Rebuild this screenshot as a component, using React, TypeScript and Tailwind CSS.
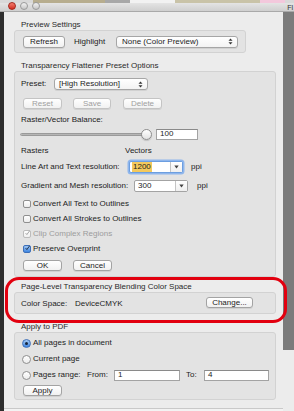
import React from "react";

const F = { fontFamily: '"Liberation Sans", Arial, sans-serif' };

function Btn({ w, children, disabled }: { w: string; children: React.ReactNode; disabled?: boolean }) {
  return (
    <div
      className={`${w} h-full flex items-center justify-center rounded-[3px] border border-[#a3a3a3] bg-gradient-to-b from-white to-[#f1f1f1] shadow-[0_1px_0_rgba(0,0,0,0.08)] text-[8px] leading-none ${disabled ? "text-[#a0a0a0] border-[#c4c4c4]" : "text-[#1c1c1c]"}`}
    >
      {children}
    </div>
  );
}

function Arrows() {
  return (
    <svg width="5" height="7" viewBox="0 0 5 7" className="shrink-0">
      <path d="M2.5 0.5 L4.5 2.8 L0.5 2.8 Z" fill="#333" />
      <path d="M2.5 6.5 L4.5 4.2 L0.5 4.2 Z" fill="#333" />
    </svg>
  );
}

function Select({ w, text, pl }: { w: string; text: string; pl: string }) {
  return (
    <div
      className={`${w} h-full flex items-center justify-between ${pl} pr-[4px] rounded-[3px] border border-[#a6a6a6] bg-gradient-to-b from-white to-[#f3f3f3] shadow-[0_1px_0_rgba(0,0,0,0.08)] text-[8px] leading-none text-[#1c1c1c]`}
    >
      <span>{text}</span>
      <Arrows />
    </div>
  );
}

function Combo({ w, text, focus }: { w: string; text: string; focus?: boolean }) {
  return (
    <div
      className={`${w} h-full flex rounded-[2px] border ${focus ? "border-[#6c9ee0] shadow-[0_0_0_1.5px_#8fb6ec]" : "border-[#a3a3a3]"} bg-white text-[8px] leading-none text-[#1c1c1c]`}
    >
      <div className="flex-1 flex items-center pl-[2px]">
        {focus ? <span className="bg-[#f4c95d] px-[1px] py-[1px]">{text}</span> : <span className="pl-[1px]">{text}</span>}
      </div>
      <div className="w-[12px] flex items-center justify-center border-l border-[#c4c4c4] bg-gradient-to-b from-white to-[#efefef]">
        <svg width="5" height="4" viewBox="0 0 5 4">
          <path d="M0.3 0.5 L4.7 0.5 L2.5 3.5 Z" fill="#444" />
        </svg>
      </div>
    </div>
  );
}

function Input({ w, text }: { w: string; text: string }) {
  return (
    <div
      className={`${w} h-full flex items-center pl-[3px] border border-[#a3a3a3] border-t-[#8a8a8a] bg-white text-[8px] leading-none text-[#1c1c1c]`}
    >
      {text}
    </div>
  );
}

function Check({ state }: { state: "off" | "dis" | "on" }) {
  if (state === "off")
    return <div className="w-[8px] h-[8px] rounded-[2px] border border-[#8f8f8f] bg-gradient-to-b from-white to-[#ececec]" />;
  const dis = state === "dis";
  return (
    <div
      className={`w-[8px] h-[8px] rounded-[2px] border flex items-center justify-center ${dis ? "border-[#bcbcbc] bg-gradient-to-b from-white to-[#efefef]" : "border-[#3d6fb8] bg-gradient-to-b from-[#9cc5f3] to-[#3d85e0]"}`}
    >
      <svg width="8" height="8" viewBox="0 0 8 8" className="-mt-[2px] ml-[1px]">
        <path d="M1 4.2 L3 6.5 L7.5 0.3" fill="none" stroke={dis ? "#9a9a9a" : "#15233a"} strokeWidth="1.4" />
      </svg>
    </div>
  );
}

function Radio({ on }: { on?: boolean }) {
  if (on)
    return (
      <div className="w-[9px] h-[9px] rounded-full border border-[#3d6fb8] bg-gradient-to-b from-[#a3c9f3] to-[#3d85e0] flex items-center justify-center">
        <div className="w-[3px] h-[3px] rounded-full bg-[#14243c]" />
      </div>
    );
  return <div className="w-[9px] h-[9px] rounded-full border border-[#8f8f8f] bg-gradient-to-b from-white to-[#ececec]" />;
}

function Label({ mt, children }: { mt: string; children: React.ReactNode }) {
  return <div className={`${mt} h-[10px] flex items-center pl-[7px] text-[8px] leading-none text-[#2a2a2a]`}>{children}</div>;
}

export default function App() {
  return (
    <div className="w-[294px] h-[411px] bg-[#ececec] relative overflow-hidden" style={F}>
      {/* title bar */}
      <div className="relative h-[12px]">
        <div className="h-[3px] flex">
          <div className="w-[33px] bg-[#d9d9d9]" />
          <div className="w-[72px] bg-[#b7ad8e]" />
          <div className="w-[25px] bg-[#a8a8a8]" />
          <div className="w-[45px] bg-[#f2f2f2]" />
          <div className="w-[85px] bg-[#c9c3a8]" />
          <div className="w-[25px] bg-[#f3c8dc]" />
          <div className="flex-1 bg-[#d9d9d9]" />
        </div>
        <div className="h-[9px] bg-gradient-to-b from-[#e4e4e4] to-[#cfcfcf] border-b border-[#a9a9a9] flex items-center justify-end pr-[1px]">
          <span className="text-[7px] leading-none text-[#333]">Fl</span>
        </div>
        <div className="absolute left-[8px] top-[2px] flex gap-[4px]">
          <div className="w-[8px] h-[8px] rounded-full bg-gradient-to-b from-[#f47c70] to-[#d2281c] border border-[#a3271d]" />
          <div className="w-[8px] h-[8px] rounded-full bg-gradient-to-b from-[#f2f2f2] to-[#c7c7c7] border border-[#9a9a9a]" />
          <div className="w-[8px] h-[8px] rounded-full bg-gradient-to-b from-[#f2f2f2] to-[#c7c7c7] border border-[#9a9a9a]" />
        </div>
      </div>

      <div className="flex h-[399px]">
        <div className="w-[4px] bg-[#2d2d2d]" />
        <div className="w-[279px] flex flex-col pl-[10px]">
          {/* Preview Settings */}
          <Label mt="mt-[8px]">Preview Settings</Label>
          <div className="w-[232px] h-[23px] rounded-[3px] border border-[#d2d2d2] bg-[#e3e3e3] flex items-center pl-[8px]">
            <div className="h-[12px] flex items-center">
              <Btn w="w-[42px]">Refresh</Btn>
              <span className="ml-[9px] w-[42px] text-[8px] leading-none text-[#1c1c1c]">Highlight</span>
              <Select w="w-[122px]" text="None (Color Preview)" pl="pl-[5px]" />
            </div>
          </div>

          {/* Flattener */}
          <Label mt="mt-[8px]">Transparency Flattener Preset Options</Label>
          <div className="w-[262px] h-[206px] rounded-[3px] border border-[#d2d2d2] bg-[#e3e3e3] flex flex-col pl-[6px] pt-[6px] text-[8px] leading-none text-[#1c1c1c]">
            <div className="h-[12px] flex items-center">
              <span className="w-[33px]">Preset:</span>
              <Select w="w-[94px]" text="[High Resolution]" pl="pl-[4px]" />
            </div>
            <div className="mt-[8px] h-[11px] flex pl-[2px]">
              <Btn w="w-[39px]" disabled>Reset</Btn>
              <div className="ml-[11px] h-full"><Btn w="w-[38px]" disabled>Save</Btn></div>
              <div className="ml-[12px] h-full"><Btn w="w-[39px]" disabled>Delete</Btn></div>
            </div>
            <div className="mt-[6px] h-[10px] flex items-center">Raster/Vector Balance:</div>
            <div className="mt-[3px] h-[12px] flex items-center">
              <div className="-ml-[1px] w-[132px] h-[12px] flex items-center">
                <div className="flex-1 h-[3px] rounded-full bg-gradient-to-b from-[#9d9d9d] to-[#cfcfcf] border border-[#9a9a9a]" />
                <div className="-ml-[6px] w-[11px] h-[11px] rounded-full border border-[#8e8e8e] bg-gradient-to-b from-white to-[#e2e2e2] shadow-[0_1px_1px_rgba(0,0,0,0.15)]" />
              </div>
              <div className="ml-[4px] h-[11px]"><Input w="w-[42px]" text="100" /></div>
            </div>
            <div className="mt-[6px] h-[10px] flex items-center">
              <span className="w-[104px]">Rasters</span>
              <span>Vectors</span>
            </div>
            <div className="mt-[5px] h-[12px] flex items-center">
              <span className="w-[108px]">Line Art and Text resolution:</span>
              <Combo w="w-[54px]" text="1200" focus />
              <span className="ml-[8px]">ppi</span>
            </div>
            <div className="mt-[7px] h-[12px] flex items-center">
              <span className="w-[113px]">Gradient and Mesh resolution:</span>
              <Combo w="w-[54px]" text="300" />
              <span className="ml-[9px]">ppi</span>
            </div>
            <div className="mt-[4px] flex flex-col pl-[2px]">
              <div className="h-[15px] flex items-center gap-[2px]"><Check state="off" /><span>Convert All Text to Outlines</span></div>
              <div className="h-[15px] flex items-center gap-[2px]"><Check state="off" /><span>Convert All Strokes to Outlines</span></div>
              <div className="h-[15px] flex items-center gap-[2px]"><Check state="dis" /><span className="text-[#9c9c9c]">Clip Complex Regions</span></div>
              <div className="h-[15px] flex items-center gap-[2px]"><Check state="on" /><span>Preserve Overprint</span></div>
            </div>
            <div className="mt-[4px] h-[11px] flex pl-[2px]">
              <Btn w="w-[39px]">OK</Btn>
              <div className="ml-[11px] h-full"><Btn w="w-[39px]">Cancel</Btn></div>
            </div>
          </div>

          {/* Page-level */}
          <Label mt="mt-[5px]">Page-Level Transparency Blending Color Space</Label>
          <div className="w-[262px] h-[22px] rounded-[3px] border border-[#d2d2d2] bg-[#e3e3e3] flex items-center pl-[6px] text-[8px] leading-none text-[#1c1c1c]">
            <span className="w-[54px] mt-[1px]">Color Space:</span>
            <span className="mt-[1px]">DeviceCMYK</span>
            <div className="ml-auto mr-[22px] h-[11px] -mt-[1px]"><Btn w="w-[47px]">Change...</Btn></div>
          </div>

          {/* Apply to PDF */}
          <Label mt="mt-[8px]">Apply to PDF</Label>
          <div className="w-[262px] h-[68px] rounded-[3px] border border-[#d2d2d2] bg-[#e3e3e3] flex flex-col pl-[7px] pt-[2px] text-[8px] leading-none text-[#1c1c1c]">
            <div className="h-[16px] flex items-center gap-[2px]"><Radio on /><span>All pages in document</span></div>
            <div className="h-[16px] flex items-center gap-[2px]"><Radio /><span>Current page</span></div>
            <div className="h-[16px] flex items-center">
              <Radio />
              <span className="ml-[2px] w-[54px]">Pages range:</span>
              <span className="w-[27px]">From:</span>
              <div className="h-[11px]"><Input w="w-[66px]" text="1" /></div>
              <span className="ml-[6px] w-[18px]">To:</span>
              <div className="h-[11px]"><Input w="w-[65px]" text="4" /></div>
            </div>
            <div className="mt-[2px] h-[11px] flex pl-[1px]">
              <Btn w="w-[39px]">Apply</Btn>
            </div>
          </div>

          <div className="mt-auto h-[3px] border-t border-[#c9c9c9] bg-[#f3f3f3] -ml-[10px]" />
        </div>
        <div className="w-[11px] h-[338px] bg-[#7b7b7b]" />
      </div>

      {/* red annotation */}
      <div className="absolute left-[5px] top-[277px] w-[282px] h-[46px] rounded-[14px] border-[3px] border-[#e2000f]" />
    </div>
  );
}
